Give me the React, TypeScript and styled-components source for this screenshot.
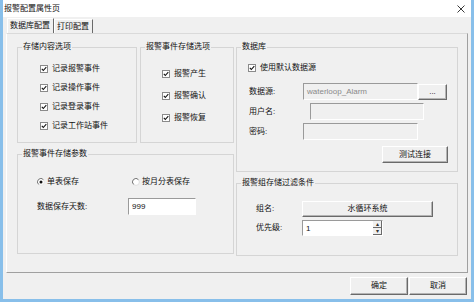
import React from 'react';
import styled, {createGlobalStyle} from 'styled-components';

const FONT = `"Liberation Sans", "Noto Sans CJK SC", sans-serif`;

const Global = createGlobalStyle`
    html, body {
        margin: 0;
        padding: 0;
        background: #fff;
    }
    * {
        box-sizing: border-box;
    }
`;

function CheckMark() {
    return (
        <svg width="8" height="8" viewBox="0 0 8 8">
            <rect x="0.5" y="0.5" width="7" height="7" fill="#fff" stroke="#8a8a8a"/>
            <path d="M1.8 3.9 L3.3 5.5 L6.3 2.2" fill="none" stroke="#111" strokeWidth="1.1"/>
        </svg>
    );
}

function RadioMark({checked}: {checked?: boolean}) {
    return (
        <svg width="8" height="8" viewBox="0 0 8 8">
            <circle cx="4" cy="4" r="3.4" fill="#fff" stroke={checked ? '#e6e6e6' : '#dedede'}/>
            <path d="M6.4 1.6 A3.4 3.4 0 1 0 1.6 6.4" fill="none" stroke="#7a7a7a" strokeWidth="1"/>
            {checked && <circle cx="4" cy="4" r="1.5" fill="#111"/>}
        </svg>
    );
}

function CloseIcon() {
    return (
        <svg width="8" height="8" viewBox="0 0 8 8">
            <path d="M0.5 0.5 L7.5 7.5 M7.5 0.5 L0.5 7.5" stroke="#222" strokeWidth="0.9"/>
        </svg>
    );
}

function App() {
    return (
        <>
            <Global/>
            <Frame>
                <TitleBar>
                    <Title>报警配置属性页</Title>
                    <CloseIcon/>
                </TitleBar>
                <Body>
                    <TabStrip>
                        <Tab $active>数据库配置</Tab>
                        <Tab>打印配置</Tab>
                    </TabStrip>
                    <Panel>
                        <Column $width={217}>
                            <Row $gap={3}>
                                <Group $width={120} $height={101}>
                                    <Legend>存储内容选项</Legend>
                                    <GroupContent $pad="12px 0 0 22px" $gap={9}>
                                        <Check><CheckMark/>记录报警事件</Check>
                                        <Check><CheckMark/>记录操作事件</Check>
                                        <Check><CheckMark/>记录登录事件</Check>
                                        <Check><CheckMark/>记录工作站事件</Check>
                                    </GroupContent>
                                </Group>
                                <Group $width={94} $height={101}>
                                    <Legend>报警事件存储选项</Legend>
                                    <GroupContent $pad="17px 0 0 21px" $gap={12}>
                                        <Check><CheckMark/>报警产生</Check>
                                        <Check><CheckMark/>报警确认</Check>
                                        <Check><CheckMark/>报警恢复</Check>
                                    </GroupContent>
                                </Group>
                            </Row>
                            <Group $width={217} $height={105}>
                                <Legend>报警事件存储参数</Legend>
                                <GroupContent $pad="18px 0 0 19px" $gap={11}>
                                    <Row $gap={0}>
                                        <Radio $width={95}><RadioMark checked/>单表保存</Radio>
                                        <Radio><RadioMark/>按月分表保存</Radio>
                                    </Row>
                                    <Field>
                                        <FieldLabel $width={91}>数据保存天数:</FieldLabel>
                                        <TextBox $width={68}>999</TextBox>
                                    </Field>
                                </GroupContent>
                            </Group>
                        </Column>
                        <Column $width={222}>
                            <Group $width={222} $height={130}>
                                <Legend>数据库</Legend>
                                <GroupContent $pad="11px 9px 0 11px" $gap={0}>
                                    <Check><CheckMark/>使用默认数据源</Check>
                                    <FieldList>
                                        <Field>
                                            <FieldLabel $width={54}>数据源:</FieldLabel>
                                            <TextBox $width={115} $disabled>waterloop_Alarm</TextBox>
                                            <PushButton $width={29} $height={16}>...</PushButton>
                                        </Field>
                                        <Field>
                                            <FieldLabel $width={61}>用户名:</FieldLabel>
                                            <TextBox $width={114} $disabled/>
                                        </Field>
                                        <Field>
                                            <FieldLabel $width={54}>密码:</FieldLabel>
                                            <TextBox $width={115} $disabled/>
                                        </Field>
                                        <ButtonRow>
                                            <PushButton $width={66} $height={17}>测试连接</PushButton>
                                        </ButtonRow>
                                    </FieldList>
                                </GroupContent>
                            </Group>
                            <Group $width={222} $height={78}>
                                <Legend>报警组存储过滤条件</Legend>
                                <GroupContent $pad="13px 0 0 19px" $gap={3}>
                                    <Field>
                                        <FieldLabel $width={46}>组名:</FieldLabel>
                                        <PushButton $width={131} $height={16}>水循环系统</PushButton>
                                    </Field>
                                    <Field>
                                        <FieldLabel $width={46}>优先级:</FieldLabel>
                                        <Spin>
                                            <SpinValue>1</SpinValue>
                                            <SpinButtons>
                                                <SpinArrow>▴</SpinArrow>
                                                <SpinArrow>▾</SpinArrow>
                                            </SpinButtons>
                                        </Spin>
                                    </Field>
                                </GroupContent>
                            </Group>
                        </Column>
                    </Panel>
                    <Footer>
                        <PushButton $width={58} $height={18}>确定</PushButton>
                        <PushButton $width={58} $height={18}>取消</PushButton>
                    </Footer>
                </Body>
            </Frame>
        </>
    );
}

const Frame = styled.div`
    width: 474px;
    height: 302px;
    display: flex;
    flex-direction: column;
    border: 3px solid #88bfea;
    border-top: 0;
    background: #f0f0f0;
    font-family: ${FONT};
    font-size: 8px;
    color: #111;
`;

const TitleBar = styled.div`
    height: 17px;
    display: flex;
    align-items: center;
    justify-content: space-between;
    padding: 0 6px 0 1px;
    background: #fff;
`;

const Title = styled.span`
    line-height: 10px;
`;

const Body = styled.div`
    flex: 1;
    display: flex;
    flex-direction: column;
    padding: 0 3px;
`;

const TabStrip = styled.div`
    height: 16px;
    display: flex;
    align-items: flex-end;
    padding-left: 1px;
`;

const Tab = styled.div<{ $active?: boolean }>`
    height: ${p => p.$active ? 15 : 14}px;
    display: flex;
    align-items: center;
    padding: 0 3px 0 2px;
    border-left: 1px solid #fff;
    border-top: 1px solid #fff;
    border-right: 1px solid #6a6a6a;
    line-height: 10px;
`;

const Panel = styled.div`
    height: 240px;
    display: flex;
    gap: 2px;
    padding: 8px 0 0 10px;
    border: 1px solid #a0a0a0;
    border-top-color: #dadada;
    border-left-color: #fff;
`;

const Column = styled.div<{ $width: number }>`
    width: ${p => p.$width}px;
    display: flex;
    flex-direction: column;
    gap: 6px;
`;

const Row = styled.div<{ $gap: number }>`
    display: flex;
    align-items: center;
    gap: ${p => p.$gap}px;
`;

const Group = styled.fieldset<{ $width: number, $height: number }>`
    width: ${p => p.$width}px;
    height: ${p => p.$height}px;
    min-width: 0;
    margin: 0;
    padding: 0;
    border: 1px solid #d5d5d5;
`;

const Legend = styled.legend`
    margin-left: 4px;
    padding: 0 1px;
    line-height: 10px;
`;

const GroupContent = styled.div<{ $pad: string, $gap: number }>`
    display: flex;
    flex-direction: column;
    align-items: flex-start;
    padding: ${p => p.$pad};
    gap: ${p => p.$gap}px;
`;

const Check = styled.label`
    height: 10px;
    display: flex;
    align-items: center;
    gap: 4px;
    line-height: 10px;
`;

const Radio = styled.label<{ $width?: number }>`
    ${p => p.$width ? `width: ${p.$width}px;` : ''}
    height: 10px;
    display: flex;
    align-items: center;
    gap: 2px;
    line-height: 10px;
`;

const FieldList = styled.div`
    margin: 10px 0 0 1px;
    align-self: stretch;
    display: flex;
    flex-direction: column;
    gap: 3px;
`;

const Field = styled.div`
    display: flex;
    align-items: center;
`;

const FieldLabel = styled.span<{ $width: number }>`
    width: ${p => p.$width}px;
    flex-shrink: 0;
    line-height: 10px;
`;

const TextBox = styled.div<{ $width: number, $disabled?: boolean }>`
    width: ${p => p.$width}px;
    height: 17px;
    display: flex;
    align-items: center;
    padding: 0 3px;
    border: 1px solid #fff;
    border-top-color: #9a9a9a;
    border-left-color: #9a9a9a;
    background: ${p => p.$disabled ? '#f0f0f0' : '#fff'};
    color: ${p => p.$disabled ? '#8a8a8a' : '#111'};
`;

const PushButton = styled.div<{ $width: number, $height: number }>`
    width: ${p => p.$width}px;
    height: ${p => p.$height}px;
    flex-shrink: 0;
    display: flex;
    align-items: center;
    justify-content: center;
    border: 1px solid #fff;
    border-right-color: #6a6a6a;
    border-bottom-color: #6a6a6a;
    box-shadow: inset -1px -1px 0 #b4b4b4;
    background: #f0f0f0;
    line-height: 10px;
`;

const ButtonRow = styled.div`
    margin-top: 3px;
    display: flex;
    justify-content: flex-end;
`;

const Spin = styled.div`
    width: 81px;
    height: 16px;
    display: flex;
    align-items: stretch;
    border: 1px solid #fff;
    border-top-color: #9a9a9a;
    border-left-color: #9a9a9a;
    background: #fff;
`;

const SpinValue = styled.span`
    flex: 1;
    display: flex;
    align-items: center;
    padding-left: 3px;
`;

const SpinButtons = styled.div`
    width: 9px;
    display: flex;
    flex-direction: column;
`;

const SpinArrow = styled.span`
    flex: 1;
    display: flex;
    align-items: center;
    justify-content: center;
    background: #f0f0f0;
    border-right: 1px solid #6a6a6a;
    border-bottom: 1px solid #6a6a6a;
    font-size: 6px;
    line-height: 6px;
    color: #333;
`;

const Footer = styled.div`
    flex: 1;
    display: flex;
    align-items: flex-start;
    justify-content: flex-end;
    gap: 1px;
    padding: 4px 1px 0 0;
`;

export default App;
